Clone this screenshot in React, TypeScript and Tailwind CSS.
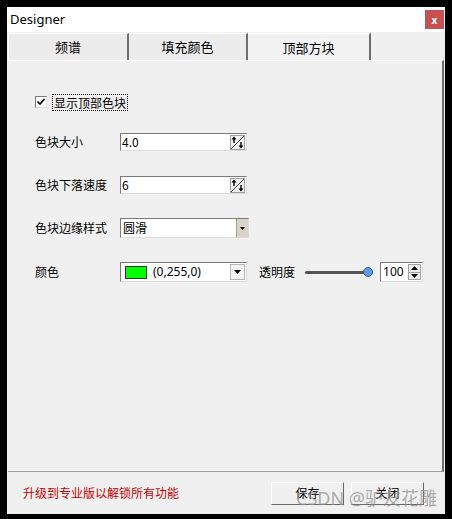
import React from 'react';

const cjk = { fontFamily: '"Noto Sans CJK SC", "Noto Sans", sans-serif' };

const SpinIcon: React.FC = () => (
  <svg width="15" height="15" viewBox="0 0 15 15" className="shrink-0">
    <rect x="0.5" y="0.5" width="14" height="14" fill="#f0f0f0" stroke="#a0a0a0" />
    <line x1="1" y1="14" x2="14" y2="1" stroke="#404040" strokeWidth="1" />
    <path d="M4 1.5 L1.5 4.5 L6.5 4.5 Z" fill="#000" />
    <rect x="3.3" y="4" width="1.4" height="4" fill="#000" />
    <path d="M11 13.5 L8.5 10.5 L13.5 10.5 Z" fill="#000" />
    <rect x="10.3" y="7" width="1.4" height="4" fill="#000" />
  </svg>
);

const SpinField: React.FC<{ value: string }> = ({ value }) => (
  <div className="flex items-center w-[127px] h-[18px] bg-white border border-[#7a7a7a] border-r-[#dcdcdc] border-b-[#dcdcdc] pl-[1px] pr-[1px]">
    <span className="flex-1 text-[12px] leading-none text-black" style={cjk}>{value}</span>
    <SpinIcon />
  </div>
);

const Row: React.FC<{ label: string; className?: string; children: React.ReactNode }> = ({ label, className, children }) => (
  <div className={`flex items-center h-[20px] ${className ?? ''}`}>
    <span className="w-[85px] text-[12px] text-black" style={cjk}>{label}</span>
    {children}
  </div>
);

const Tab: React.FC<{ label: string; selected?: boolean; className?: string }> = ({ label, selected, className }) => (
  <div
    className={`flex items-center justify-center border-t border-white border-r-2 border-r-[#6e6e6e] text-[13px] text-black ${
      selected ? 'bg-[#f2f2f2] -mb-px h-[28px]' : 'bg-[#ececec] h-[27px]'
    } ${className ?? ''}`}
    style={cjk}
  >
    {label}
  </div>
);

const WinButton: React.FC<{ label: string }> = ({ label }) => (
  <button
    className="w-[73px] h-[23px] bg-[#f0f0f0] border border-white border-r-[#696969] border-b-[#696969] text-[12px] text-black"
    style={cjk}
  >
    {label}
  </button>
);

export default function App() {
  return (
    <div className="w-[452px] h-[519px] bg-black pt-[7px] pl-[7px] pr-[7px] pb-[5px]">
      <div className="relative flex flex-col h-full bg-[#f0f0f0]">
        {/* title bar */}
        <div className="flex items-center justify-between h-[25px] bg-white pl-[3px] pr-[1px]">
          <span className="text-[13px] text-black" style={{ fontFamily: '"Noto Sans", sans-serif' }}>
            Designer
          </span>
          <div className="flex items-center justify-center w-[19px] h-[19px] bg-[#c75050] text-white text-[10px] font-bold leading-none">
            x
          </div>
        </div>

        {/* tabs */}
        <div className="flex items-end h-[28px] px-[1px]">
          <Tab label="频谱" className="w-[121px] border-l border-l-white" />
          <Tab label="填充颜色" className="w-[119px]" />
          <Tab label="顶部方块" selected className="w-[123px]" />
        </div>

        {/* panel */}
        <div className="flex-1 mx-[1px] border-t border-white border-r-2 border-r-[#6e6e6e] border-b border-b-[#a0a0a0] bg-[#f0f0f0] pl-[27px] pt-[31px]">
          <div className="flex items-center h-[20px] gap-[5px]">
            <div className="relative w-[12px] h-[12px] bg-white border border-[#7a7a7a] border-r-[#dcdcdc] border-b-[#dcdcdc]">
              <svg width="10" height="10" viewBox="0 0 10 10" className="absolute left-0 top-0">
                <path d="M1.5 4.5 L4 7 L8.5 2" stroke="#000" strokeWidth="1.6" fill="none" />
              </svg>
            </div>
            <span className="border border-dotted border-black px-[1px] text-[12px] leading-[15px] text-black" style={cjk}>
              显示顶部色块
            </span>
          </div>

          <Row label="色块大小" className="mt-[20px]">
            <SpinField value="4.0" />
          </Row>

          <Row label="色块下落速度" className="mt-[23px]">
            <SpinField value="6" />
          </Row>

          <Row label="色块边缘样式" className="mt-[23px]">
            <div className="flex w-[129px] h-[20px] bg-white border border-[#7a7a7a] border-r-[#dcdcdc] border-b-[#dcdcdc]">
              <span className="flex-1 flex items-center pl-[2px] text-[12px] text-black" style={cjk}>
                圆滑
              </span>
              <div className="flex items-center justify-center w-[12px] bg-[#d8d4c8] border-l border-[#a0a0a0]">
                <svg width="5" height="3" viewBox="0 0 5 3">
                  <path d="M0 0 L5 0 L2.5 3 Z" fill="#000" />
                </svg>
              </div>
            </div>
          </Row>

          <Row label="颜色" className="mt-[24px]">
            <div className="flex items-center w-[127px] h-[20px] bg-white border border-[#7a7a7a] border-r-[#dcdcdc] border-b-[#dcdcdc] pl-[4px] pr-[1px]">
              <div className="w-[22px] h-[13px] bg-[#00ff00] border border-[#333]" />
              <span className="flex-1 pl-[6px] text-[12px] text-black" style={{ fontFamily: '"Noto Sans", sans-serif' }}>
                (0,255,0)
              </span>
              <div className="flex items-center justify-center w-[15px] h-[16px] bg-[#f4f4f4] border border-[#b5b5b5]">
                <svg width="7" height="4" viewBox="0 0 7 4">
                  <path d="M0 0 L7 0 L3.5 4 Z" fill="#000" />
                </svg>
              </div>
            </div>
            <span className="ml-[12px] text-[12px] text-black" style={cjk}>
              透明度
            </span>
            <div className="relative ml-[10px] w-[68px] h-[12px] flex items-center">
              <div className="w-full h-[3px] bg-[#555] rounded-full" />
              <div className="absolute right-0 top-[1px] w-[10px] h-[10px] rounded-full bg-[#5b9be0] border border-[#2f5f9e]" />
            </div>
            <div className="ml-[7px] flex items-center w-[43px] h-[20px] bg-white border border-[#7a7a7a] border-r-[#dcdcdc] border-b-[#dcdcdc] pl-[2px]">
              <span className="flex-1 text-[12px] text-black" style={{ fontFamily: '"Noto Sans", sans-serif' }}>
                100
              </span>
              <div className="flex flex-col w-[13px] h-[16px] mr-[1px]">
                <div className="flex-1 flex items-center justify-center bg-[#eeeeee] border border-[#a0a0a0]">
                  <svg width="7" height="4" viewBox="0 0 7 4">
                    <path d="M0 4 L7 4 L3.5 0 Z" fill="#000" />
                  </svg>
                </div>
                <div className="flex-1 flex items-center justify-center bg-[#eeeeee] border border-t-0 border-[#a0a0a0]">
                  <svg width="7" height="4" viewBox="0 0 7 4">
                    <path d="M0 0 L7 0 L3.5 4 Z" fill="#000" />
                  </svg>
                </div>
              </div>
            </div>
          </Row>
        </div>

        {/* bottom bar */}
        <div className="flex items-center h-[42px] pl-[16px] pr-[21px]">
          <span className="flex-1 text-[12px] text-[#cc0000]" style={cjk}>
            升级到专业版以解锁所有功能
          </span>
          <div className="flex gap-[7px]">
            <WinButton label="保存" />
            <WinButton label="关闭" />
          </div>
        </div>

        {/* watermark */}
        <span
          className="absolute z-10 right-[8px] bottom-[7px] text-[18px] leading-none text-[#8c8c8c]/70 pointer-events-none"
          style={{ fontFamily: '"Noto Sans", "Noto Sans CJK SC", sans-serif' }}
        >
          CSDN @驴友花雕
        </span>
      </div>
    </div>
  );
}
